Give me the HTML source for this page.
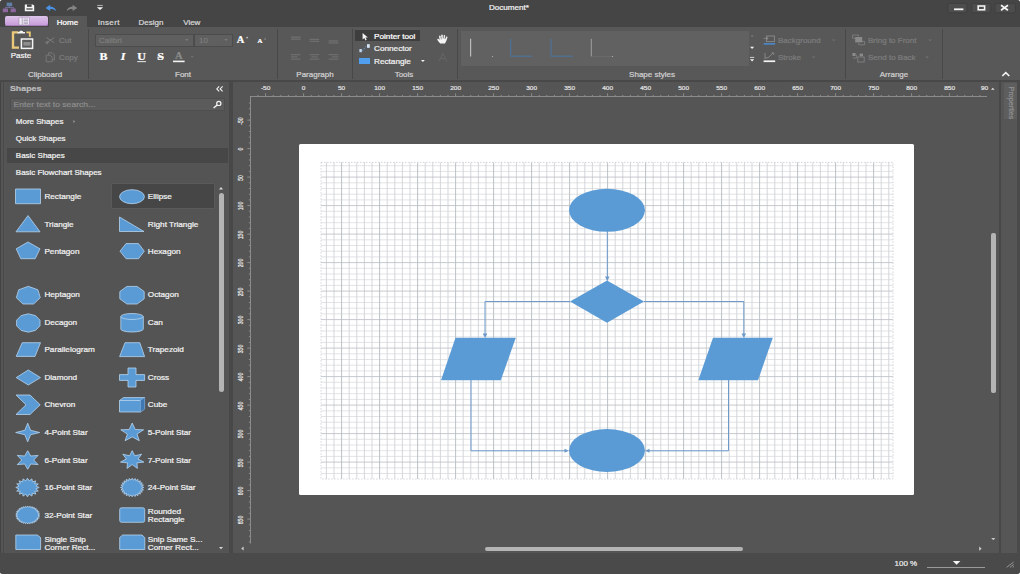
<!DOCTYPE html>
<html><head><meta charset="utf-8"><title>Document*</title>
<style>
html,body{margin:0;padding:0;background:#fff;overflow:hidden}
#app{position:relative;width:1020px;height:574px;overflow:hidden;border-radius:3px;background:#555555;font-family:"Liberation Sans",sans-serif}
#app>div{position:absolute}
.t{position:absolute;white-space:nowrap;line-height:1.05;transform:translateY(-50%) scaleY(.9);-webkit-text-stroke:0.25px currentColor}
.t.c{transform:translate(-50%,-50%) scaleY(.9);text-align:center}
.rl{font-size:6.5px;color:#e0e0e0}
.rv{font-size:7px;color:#e6e6e6;transform:translate(-50%,-50%) rotate(-90deg) scaleX(.72)}
#ov{position:absolute;left:0;top:0;width:1020px;height:574px;pointer-events:none}
</style></head><body><div id="app">
<div style="left:0px;top:0px;width:1020px;height:27px;background:#454545;"></div>
<span class="t c" style="left:509px;top:7.8px;font-size:8.1px;color:#f0f0f0;">Document*</span>
<div style="left:5.3px;top:16.3px;width:42.7px;height:10.0px;background:linear-gradient(#dcc4e7,#c799da);border-radius:2px;box-shadow:inset 0 -1px 0 #a57fb8"></div>
<div style="left:49px;top:16px;width:38px;height:12px;background:#585858;"></div>
<span class="t c" style="left:67.5px;top:22.9px;font-size:8px;color:#ffffff;">Home</span>
<span class="t c" style="left:108.7px;top:22.9px;font-size:8px;color:#d8d8d8;letter-spacing:.35px">Insert</span>
<span class="t c" style="left:151px;top:22.9px;font-size:8px;color:#d8d8d8;">Design</span>
<span class="t c" style="left:191.8px;top:22.9px;font-size:8px;color:#d8d8d8;">View</span>
<div style="left:0px;top:27px;width:1020px;height:53px;background:#585858;"></div>
<div style="left:0px;top:80px;width:1020px;height:2px;background:#484848;"></div>
<div style="left:88px;top:29px;width:1px;height:50px;background:#484848;"></div>
<div style="left:277px;top:29px;width:1px;height:50px;background:#484848;"></div>
<div style="left:352px;top:29px;width:1px;height:50px;background:#484848;"></div>
<div style="left:457px;top:29px;width:1px;height:50px;background:#484848;"></div>
<div style="left:845px;top:29px;width:1px;height:50px;background:#484848;"></div>
<div style="left:942px;top:29px;width:1px;height:50px;background:#484848;"></div>
<span class="t c" style="left:45px;top:75.4px;font-size:8px;color:#cfcfcf;">Clipboard</span>
<span class="t c" style="left:183px;top:75.4px;font-size:8px;color:#cfcfcf;">Font</span>
<span class="t c" style="left:315px;top:75.4px;font-size:8px;color:#cfcfcf;">Paragraph</span>
<span class="t c" style="left:404px;top:75.4px;font-size:8px;color:#cfcfcf;">Tools</span>
<span class="t c" style="left:652px;top:75.4px;font-size:8px;color:#cfcfcf;">Shape styles</span>
<span class="t c" style="left:894px;top:75.4px;font-size:8px;color:#cfcfcf;">Arrange</span>
<span class="t c" style="left:21px;top:55.6px;font-size:8px;color:#f0f0f0;">Paste</span>
<span class="t" style="left:59px;top:40.5px;font-size:8px;color:#7c7c7c;">Cut</span>
<span class="t" style="left:59px;top:57.5px;font-size:8px;color:#7c7c7c;">Copy</span>
<div style="left:95.5px;top:34.5px;width:97.5px;height:11.0px;background:#5f5f5f;box-shadow:0 0 0 1px #4c4c4c"></div>
<div style="left:195px;top:34.5px;width:37px;height:11.0px;background:#5f5f5f;box-shadow:0 0 0 1px #4c4c4c"></div>
<span class="t" style="left:99px;top:40.5px;font-size:8px;color:#7c7c7c;">Calibri</span>
<span class="t" style="left:199px;top:40.5px;font-size:8px;color:#7c7c7c;">10</span>
<span class="t c" style="left:240.6px;top:40.3px;font-size:10.5px;color:#ffffff;font-family:'Liberation Serif',serif;font-weight:bold;">A</span>
<span class="t c" style="left:260px;top:41.2px;font-size:6.8px;color:#ffffff;font-family:'Liberation Serif',serif;font-weight:bold;">A</span>
<span class="t c" style="left:103.5px;top:57.3px;font-size:12px;color:#ffffff;font-family:'Liberation Serif',serif;font-weight:bold;">B</span>
<span class="t c" style="left:123px;top:57.3px;font-size:12px;color:#ffffff;font-family:'Liberation Serif',serif;font-weight:bold;font-style:italic;">I</span>
<span class="t c" style="left:141.6px;top:57.3px;font-size:12px;color:#ffffff;font-family:'Liberation Serif',serif;font-weight:bold;text-decoration:underline;text-underline-offset:1px;">U</span>
<span class="t c" style="left:160.5px;top:57.3px;font-size:12px;color:#ffffff;font-family:'Liberation Serif',serif;font-weight:bold;text-decoration:line-through;">S</span>
<span class="t c" style="left:178.8px;top:56px;font-size:10.5px;color:#8c8c8c;font-family:'Liberation Serif',serif;font-weight:bold;">A</span>
<div style="left:355.2px;top:30.4px;width:64.80000000000001px;height:10.200000000000003px;background:#3e3e3e;"></div>
<span class="t" style="left:374px;top:36.8px;font-size:8.2px;color:#ffffff;">Pointer tool</span>
<span class="t" style="left:374px;top:49.1px;font-size:8.2px;color:#f0f0f0;">Connector</span>
<span class="t" style="left:374px;top:62px;font-size:8.2px;color:#f0f0f0;">Rectangle</span>
<div style="left:359px;top:58.2px;width:11.199999999999989px;height:6.0px;background:#4f9fee;"></div>
<div style="left:461px;top:30.5px;width:287.5px;height:35.0px;background:#616161;"></div>
<span class="t" style="left:778px;top:40.5px;font-size:8px;color:#7c7c7c;">Background</span>
<span class="t" style="left:778px;top:57.5px;font-size:8px;color:#7c7c7c;">Stroke</span>
<span class="t" style="left:868px;top:40.5px;font-size:8px;color:#7c7c7c;">Bring to Front</span>
<span class="t" style="left:868px;top:57.5px;font-size:8px;color:#7c7c7c;">Send to Back</span>
<div style="left:0px;top:82px;width:1020px;height:471px;background:#555555;"></div>
<div style="left:0px;top:82px;width:1px;height:492px;background:#444444;"></div>
<div style="left:3px;top:82px;width:1px;height:471px;background:#4a4a4a;"></div>
<div style="left:6px;top:83px;width:223px;height:469px;background:#545454;"></div>
<div style="left:229px;top:82px;width:4px;height:471px;background:#484848;"></div>
<span class="t" style="left:10px;top:89.2px;font-size:8.8px;color:#bcbcbc;font-weight:bold">Shapes</span>
<div style="left:10.5px;top:99px;width:213.5px;height:11px;background:#5b5b5b;box-shadow:0 0 0 1px #4e4e4e"></div>
<span class="t" style="left:13.6px;top:104.5px;font-size:8.6px;color:#8c8c8c;">Enter text to search...</span>
<span class="t" style="left:15.8px;top:121.5px;font-size:8px;color:#f0f0f0;">More Shapes</span>
<span class="t" style="left:15.8px;top:138.5px;font-size:8px;color:#f0f0f0;">Quick Shapes</span>
<div style="left:7px;top:147.6px;width:221px;height:15.599999999999994px;background:#474747;"></div>
<span class="t" style="left:15.8px;top:155.8px;font-size:8px;color:#f0f0f0;">Basic Shapes</span>
<span class="t" style="left:15.8px;top:173.4px;font-size:8px;color:#f0f0f0;">Basic Flowchart Shapes</span>
<div style="left:111px;top:183px;width:103.5px;height:26px;background:#464646;box-shadow:inset 0 0 0 1px #5a5a5a;border-radius:1px"></div>
<span class="t" style="left:44.4px;top:196.70000000000002px;font-size:8.2px;color:#f0f0f0;">Rectangle</span>
<span class="t" style="left:147.8px;top:196.70000000000002px;font-size:8.2px;color:#f0f0f0;">Ellipse</span>
<span class="t" style="left:44.4px;top:225.0px;font-size:8.2px;color:#f0f0f0;">Triangle</span>
<span class="t" style="left:147.8px;top:225.0px;font-size:8.2px;color:#f0f0f0;">Right Triangle</span>
<span class="t" style="left:44.4px;top:252.0px;font-size:8.2px;color:#f0f0f0;">Pentagon</span>
<span class="t" style="left:147.8px;top:252.0px;font-size:8.2px;color:#f0f0f0;">Hexagon</span>
<span class="t" style="left:44.4px;top:295.4px;font-size:8.2px;color:#f0f0f0;">Heptagon</span>
<span class="t" style="left:147.8px;top:295.4px;font-size:8.2px;color:#f0f0f0;">Octagon</span>
<span class="t" style="left:44.4px;top:322.7px;font-size:8.2px;color:#f0f0f0;">Decagon</span>
<span class="t" style="left:147.8px;top:322.7px;font-size:8.2px;color:#f0f0f0;">Can</span>
<span class="t" style="left:44.4px;top:350.4px;font-size:8.2px;color:#f0f0f0;">Parallelogram</span>
<span class="t" style="left:147.8px;top:350.4px;font-size:8.2px;color:#f0f0f0;">Trapezoid</span>
<span class="t" style="left:44.4px;top:377.7px;font-size:8.2px;color:#f0f0f0;">Diamond</span>
<span class="t" style="left:147.8px;top:377.7px;font-size:8.2px;color:#f0f0f0;">Cross</span>
<span class="t" style="left:44.4px;top:405.4px;font-size:8.2px;color:#f0f0f0;">Chevron</span>
<span class="t" style="left:147.8px;top:405.4px;font-size:8.2px;color:#f0f0f0;">Cube</span>
<span class="t" style="left:44.4px;top:433.2px;font-size:8.2px;color:#f0f0f0;">4-Point Star</span>
<span class="t" style="left:147.8px;top:433.2px;font-size:8.2px;color:#f0f0f0;">5-Point Star</span>
<span class="t" style="left:44.4px;top:460.79999999999995px;font-size:8.2px;color:#f0f0f0;">6-Point Star</span>
<span class="t" style="left:147.8px;top:460.79999999999995px;font-size:8.2px;color:#f0f0f0;">7-Point Star</span>
<span class="t" style="left:44.4px;top:488.2px;font-size:8.2px;color:#f0f0f0;">16-Point Star</span>
<span class="t" style="left:147.8px;top:488.2px;font-size:8.2px;color:#f0f0f0;">24-Point Star</span>
<span class="t" style="left:44.4px;top:516.0px;font-size:8.2px;color:#f0f0f0;">32-Point Star</span>
<span class="t" style="left:147.8px;top:516.0px;font-size:8.2px;color:#f0f0f0;">Rounded<br>Rectangle</span>
<span class="t" style="left:44.4px;top:543.6px;font-size:8.2px;color:#f0f0f0;">Single Snip<br>Corner Rect...</span>
<span class="t" style="left:147.8px;top:543.6px;font-size:8.2px;color:#f0f0f0;">Snip Same S...<br>Corner Rect...</span>
<div style="left:218.6px;top:193px;width:5.200000000000017px;height:199px;background:#b4b4b4;border-radius:2.5px"></div>
<div style="left:233px;top:82px;width:767px;height:15px;background:#555555;"></div>
<div style="left:298.8px;top:144.3px;width:615.2px;height:350.5px;background:#ffffff;border-radius:1.5px"></div>
<div style="left:1000px;top:82px;width:20px;height:471px;background:#565656;"></div>
<div style="left:999px;top:82px;width:2px;height:471px;background:#484848;"></div>
<div style="left:1004px;top:83px;width:13px;height:36px;background:#5e5e5e;"></div>
<div style="left:1017px;top:82px;width:3px;height:471px;background:#4a4a4a;"></div>
<span class="t" style="left:1011px;top:102.5px;font-size:7.2px;color:#8e8e8e;transform:translate(-50%,-50%) rotate(90deg)">Properties</span>
<div style="left:990.8px;top:233px;width:5.0px;height:160px;background:#b4b4b4;border-radius:2px"></div>
<div style="left:485px;top:546.8px;width:258px;height:4.2000000000000455px;background:#b4b4b4;border-radius:2px"></div>
<div style="left:0px;top:553px;width:1020px;height:21px;background:#4a4a4a;"></div>
<span class="t" style="left:894.5px;top:564.2px;font-size:8px;color:#e8e8e8;">100 %</span>
<div style="left:927px;top:567px;width:58px;height:1px;background:#9a9a9a;"></div>
<svg id="ov" width="1020" height="574" viewBox="0 0 1020 574"><path d="M321 165.7H893M321 171.4H893M321 182.8H893M321 188.5H893M321 194.2H893M321 199.9H893M321 211.3H893M321 217.0H893M321 222.7H893M321 228.4H893M321 239.8H893M321 245.5H893M321 251.2H893M321 256.9H893M321 268.3H893M321 274.0H893M321 279.7H893M321 285.4H893M321 296.8H893M321 302.5H893M321 308.2H893M321 313.9H893M321 325.3H893M321 331.0H893M321 336.7H893M321 342.4H893M321 353.8H893M321 359.5H893M321 365.2H893M321 370.9H893M321 382.3H893M321 388.0H893M321 393.7H893M321 399.4H893M321 410.8H893M321 416.5H893M321 422.2H893M321 427.9H893M321 439.3H893M321 445.0H893M321 450.7H893M321 456.4H893M321 467.8H893M321 473.5H893" stroke="#dadcdf" stroke-width="0.8" fill="none"/>
<path d="M326.4 162.4V479M334.0 162.4V479M349.2 162.4V479M356.8 162.4V479M364.4 162.4V479M372.0 162.4V479M387.2 162.4V479M394.8 162.4V479M402.4 162.4V479M410.0 162.4V479M425.2 162.4V479M432.8 162.4V479M440.4 162.4V479M448.0 162.4V479M463.2 162.4V479M470.8 162.4V479M478.4 162.4V479M486.0 162.4V479M501.2 162.4V479M508.8 162.4V479M516.4 162.4V479M524.0 162.4V479M539.2 162.4V479M546.8 162.4V479M554.4 162.4V479M562.0 162.4V479M577.2 162.4V479M584.8 162.4V479M592.4 162.4V479M600.0 162.4V479M615.2 162.4V479M622.8 162.4V479M630.4 162.4V479M638.0 162.4V479M653.2 162.4V479M660.8 162.4V479M668.4 162.4V479M676.0 162.4V479M691.2 162.4V479M698.8 162.4V479M706.4 162.4V479M714.0 162.4V479M729.2 162.4V479M736.8 162.4V479M744.4 162.4V479M752.0 162.4V479M767.2 162.4V479M774.8 162.4V479M782.4 162.4V479M790.0 162.4V479M805.2 162.4V479M812.8 162.4V479M820.4 162.4V479M828.0 162.4V479M843.2 162.4V479M850.8 162.4V479M858.4 162.4V479M866.0 162.4V479M881.2 162.4V479M888.8 162.4V479" stroke="#cfd2d6" stroke-width="0.9" fill="none"/>
<path d="M321 177.1H893M321 205.6H893M321 234.1H893M321 262.6H893M321 291.1H893M321 319.6H893M321 348.1H893M321 376.6H893M321 405.1H893M321 433.6H893M321 462.1H893" stroke="#bfc3c8" stroke-width="0.9" fill="none"/>
<path d="M341.6 162.4V479M379.6 162.4V479M417.6 162.4V479M455.6 162.4V479M493.6 162.4V479M531.6 162.4V479M569.6 162.4V479M607.6 162.4V479M645.6 162.4V479M683.6 162.4V479M721.6 162.4V479M759.6 162.4V479M797.6 162.4V479M835.6 162.4V479M873.6 162.4V479" stroke="#b6bbc2" stroke-width="0.9" fill="none"/>
<rect x="321" y="162.4" width="572" height="316.6" fill="none" stroke="#c8ccd2" stroke-width="0.8" stroke-dasharray="1.5 1.5"/>
<g stroke="#6d9acb" stroke-width="1" fill="none"><path d="M607.3 231V279"/><path d="M570 301.5H485V336"/><path d="M644 301.5H743.8V336"/><path d="M471 380V450.8H566"/><path d="M728.5 380V450.8H648"/></g>
<g fill="#6d9acb"><path d="M605 276.5h4.6l-2.3 4.5z"/><path d="M482.7 333.5h4.6l-2.3 4.5z"/><path d="M741.5 333.5h4.6l-2.3 4.5z"/><path d="M564.5 448.8v4l4.5 -2z"/><path d="M649.5 448.8v4l-4.5 -2z"/></g>
<g fill="#5b9bd5"><ellipse cx="607" cy="210.3" rx="38" ry="21.5"/><path d="M607 280.5L644 301.5L607 322.8L570 301.5z"/><path d="M455.5 337.8H515.8L500.8 380.2H441z"/><path d="M713 337.8H772.8L758 380.2H698.3z"/><ellipse cx="607" cy="450.5" rx="38" ry="21.5"/></g>
<path d="M250 96.5H987M250.5 96V543.5M258.0 96.5v-1.6M265.6 96.5v-3.2M273.2 96.5v-1.6M280.8 96.5v-1.6M288.4 96.5v-1.6M296.0 96.5v-1.6M303.6 96.5v-3.2M311.2 96.5v-1.6M318.8 96.5v-1.6M326.4 96.5v-1.6M334.0 96.5v-1.6M341.6 96.5v-3.2M349.2 96.5v-1.6M356.8 96.5v-1.6M364.4 96.5v-1.6M372.0 96.5v-1.6M379.6 96.5v-3.2M387.2 96.5v-1.6M394.8 96.5v-1.6M402.4 96.5v-1.6M410.0 96.5v-1.6M417.6 96.5v-3.2M425.2 96.5v-1.6M432.8 96.5v-1.6M440.4 96.5v-1.6M448.0 96.5v-1.6M455.6 96.5v-3.2M463.2 96.5v-1.6M470.8 96.5v-1.6M478.4 96.5v-1.6M486.0 96.5v-1.6M493.6 96.5v-3.2M501.2 96.5v-1.6M508.8 96.5v-1.6M516.4 96.5v-1.6M524.0 96.5v-1.6M531.6 96.5v-3.2M539.2 96.5v-1.6M546.8 96.5v-1.6M554.4 96.5v-1.6M562.0 96.5v-1.6M569.6 96.5v-3.2M577.2 96.5v-1.6M584.8 96.5v-1.6M592.4 96.5v-1.6M600.0 96.5v-1.6M607.6 96.5v-3.2M615.2 96.5v-1.6M622.8 96.5v-1.6M630.4 96.5v-1.6M638.0 96.5v-1.6M645.6 96.5v-3.2M653.2 96.5v-1.6M660.8 96.5v-1.6M668.4 96.5v-1.6M676.0 96.5v-1.6M683.6 96.5v-3.2M691.2 96.5v-1.6M698.8 96.5v-1.6M706.4 96.5v-1.6M714.0 96.5v-1.6M721.6 96.5v-3.2M729.2 96.5v-1.6M736.8 96.5v-1.6M744.4 96.5v-1.6M752.0 96.5v-1.6M759.6 96.5v-3.2M767.2 96.5v-1.6M774.8 96.5v-1.6M782.4 96.5v-1.6M790.0 96.5v-1.6M797.6 96.5v-3.2M805.2 96.5v-1.6M812.8 96.5v-1.6M820.4 96.5v-1.6M828.0 96.5v-1.6M835.6 96.5v-3.2M843.2 96.5v-1.6M850.8 96.5v-1.6M858.4 96.5v-1.6M866.0 96.5v-1.6M873.6 96.5v-3.2M881.2 96.5v-1.6M888.8 96.5v-1.6M896.4 96.5v-1.6M904.0 96.5v-1.6M911.6 96.5v-3.2M919.2 96.5v-1.6M926.8 96.5v-1.6M934.4 96.5v-1.6M942.0 96.5v-1.6M949.6 96.5v-3.2M957.2 96.5v-1.6M964.8 96.5v-1.6M972.4 96.5v-1.6M980.0 96.5v-1.6M250.5 103.0h-1.6M250.5 108.7h-1.6M250.5 114.4h-1.6M250.5 120.1h-3.2M250.5 125.8h-1.6M250.5 131.5h-1.6M250.5 137.2h-1.6M250.5 142.9h-1.6M250.5 148.6h-3.2M250.5 154.3h-1.6M250.5 160.0h-1.6M250.5 165.7h-1.6M250.5 171.4h-1.6M250.5 177.1h-3.2M250.5 182.8h-1.6M250.5 188.5h-1.6M250.5 194.2h-1.6M250.5 199.9h-1.6M250.5 205.6h-3.2M250.5 211.3h-1.6M250.5 217.0h-1.6M250.5 222.7h-1.6M250.5 228.4h-1.6M250.5 234.1h-3.2M250.5 239.8h-1.6M250.5 245.5h-1.6M250.5 251.2h-1.6M250.5 256.9h-1.6M250.5 262.6h-3.2M250.5 268.3h-1.6M250.5 274.0h-1.6M250.5 279.7h-1.6M250.5 285.4h-1.6M250.5 291.1h-3.2M250.5 296.8h-1.6M250.5 302.5h-1.6M250.5 308.2h-1.6M250.5 313.9h-1.6M250.5 319.6h-3.2M250.5 325.3h-1.6M250.5 331.0h-1.6M250.5 336.7h-1.6M250.5 342.4h-1.6M250.5 348.1h-3.2M250.5 353.8h-1.6M250.5 359.5h-1.6M250.5 365.2h-1.6M250.5 370.9h-1.6M250.5 376.6h-3.2M250.5 382.3h-1.6M250.5 388.0h-1.6M250.5 393.7h-1.6M250.5 399.4h-1.6M250.5 405.1h-3.2M250.5 410.8h-1.6M250.5 416.5h-1.6M250.5 422.2h-1.6M250.5 427.9h-1.6M250.5 433.6h-3.2M250.5 439.3h-1.6M250.5 445.0h-1.6M250.5 450.7h-1.6M250.5 456.4h-1.6M250.5 462.1h-3.2M250.5 467.8h-1.6M250.5 473.5h-1.6M250.5 479.2h-1.6M250.5 484.9h-1.6M250.5 490.6h-3.2M250.5 496.3h-1.6M250.5 502.0h-1.6M250.5 507.7h-1.6M250.5 513.4h-1.6M250.5 519.1h-3.2M250.5 524.8h-1.6M250.5 530.5h-1.6M250.5 536.2h-1.6M250.5 541.9h-1.6" stroke="#929292" stroke-width="0.9" fill="none"/><g fill="#5b9bd5" stroke="#b6d3ee" stroke-width="0.8" stroke-linejoin="round">
<rect x="15.5" y="189" width="25" height="14.7"/>
<ellipse cx="132" cy="196.7" rx="12.4" ry="7"/>
<path d="M28.0 215.6L40.0 231.8L16.0 231.8z" />
<path d="M119.5 217.0L144.0 231.5L119.5 231.5z" />
<path d="M28.0 242.0L40.0 248.8L35.2 258.7L20.8 258.7L16.2 248.8z" />
<path d="M120.0 251.2L126.0 243.6L138.5 243.6L144.3 251.2L138.5 258.7L126.0 258.7z" />
<path d="M28.3 286.3L37.9 289.8L40.3 297.7L33.6 304.0L23.0 304.0L16.3 297.7L18.7 289.8z" />
<path d="M137.1 286.4L144.2 291.6L144.2 298.8L137.1 304.0L126.9 304.0L119.8 298.8L119.8 291.6L126.9 286.4z" />
<path d="M28.3 313.8L35.5 315.6L40.0 320.2L40.0 325.8L35.5 330.4L28.3 332.2L21.1 330.4L16.6 325.8L16.6 320.2L21.1 315.6z" />
<path d="M120.8 316.5v12.5a11.2 3 0 0 0 22.5 0v-12.5z"/>
<ellipse cx="132" cy="316.5" rx="11.2" ry="3"/>
<path d="M22.2 342.7L40.5 342.7L35.0 356.4L16.2 356.4z" />
<path d="M125.0 342.7L139.8 342.7L144.6 356.6L119.6 356.6z" />
<path d="M28.3 370.0L40.5 377.6L28.3 385.0L16.2 377.6z" />
<path d="M128.0 368.0L136.0 368.0L136.0 374.6L144.6 374.6L144.6 380.4L136.0 380.4L136.0 387.0L128.0 387.0L128.0 380.4L119.5 380.4L119.5 374.6L128.0 374.6z" />
<path d="M16.0 395.0L30.0 395.0L40.2 404.8L30.0 414.5L16.0 414.5L26.0 404.8z" />
<path d="M119.5 400.5L123.5 397.6L144.6 397.6L144.6 409.0L140.5 412.0L119.5 412.0z" />
<path d="M119.5 400.5H140.5V412M140.5 400.5L144.6 397.6" fill="none"/>
<path d="M140.5 400.5L144.6 397.6V409L140.5 412z" fill="#3f78b3" stroke="none"/>
<path d="M27.7 423.2L30.6 430.3L39.7 432.5L30.6 434.7L27.7 441.8L24.8 434.7L15.7 432.5L24.8 430.3z" />
<path d="M132.2 423.0L135.2 429.5L143.6 429.8L137.0 434.1L139.3 440.7L132.2 436.9L125.1 440.7L127.4 434.1L120.8 429.8L129.2 429.5z" />
<path d="M27.7 450.7L30.7 456.0L38.1 455.4L33.7 460.0L38.1 464.6L30.7 464.0L27.7 469.3L24.7 464.0L17.3 464.6L21.7 460.0L17.3 455.4L24.7 456.0z" />
<path d="M132.2 450.7L134.8 455.8L141.6 454.2L138.0 459.0L143.9 462.1L136.9 462.9L137.4 468.4L132.2 464.6L127.0 468.4L127.5 462.9L120.5 462.1L126.4 459.0L122.8 454.2L129.6 455.8z" />
<path d="M27.5 478.2L29.2 480.8L32.0 478.9L32.3 481.8L35.8 480.9L34.7 483.7L38.3 483.9L36.0 486.2L39.2 487.5L36.0 488.8L38.3 491.1L34.7 491.3L35.8 494.1L32.3 493.2L32.0 496.1L29.2 494.2L27.5 496.8L25.8 494.2L23.0 496.1L22.7 493.2L19.2 494.1L20.3 491.3L16.7 491.1L19.0 488.8L15.8 487.5L19.0 486.2L16.7 483.9L20.3 483.7L19.2 480.9L22.7 481.8L23.0 478.9L25.8 480.8z" />
<path d="M132.2 478.2L133.4 480.1L135.2 478.5L135.8 480.6L138.0 479.4L137.9 481.6L140.5 480.9L139.6 483.0L142.3 482.9L140.8 484.7L143.5 485.1L141.5 486.5L143.9 487.5L141.5 488.5L143.5 489.9L140.8 490.3L142.3 492.1L139.6 492.0L140.5 494.1L137.9 493.4L138.0 495.6L135.8 494.4L135.2 496.5L133.4 494.9L132.2 496.8L131.0 494.9L129.2 496.5L128.6 494.4L126.3 495.6L126.5 493.4L123.9 494.1L124.8 492.0L122.1 492.1L123.6 490.3L120.9 489.9L122.9 488.5L120.5 487.5L122.9 486.5L120.9 485.1L123.6 484.7L122.1 482.9L124.8 483.0L123.9 480.9L126.5 481.6L126.3 479.4L128.6 480.6L129.2 478.5L131.0 480.1z" />
<path d="M27.7 506.0L28.7 507.3L30.0 506.2L30.7 507.6L32.3 506.7L32.6 508.2L34.4 507.5L34.2 509.0L36.2 508.6L35.7 510.1L37.7 510.0L36.8 511.4L38.8 511.6L37.6 512.8L39.5 513.2L38.0 514.2L39.7 515.0L38.0 515.8L39.5 516.8L37.6 517.2L38.8 518.4L36.8 518.6L37.7 520.0L35.7 519.9L36.2 521.4L34.2 521.0L34.4 522.5L32.6 521.8L32.3 523.3L30.7 522.4L30.0 523.8L28.7 522.7L27.7 524.0L26.7 522.7L25.4 523.8L24.7 522.4L23.1 523.3L22.8 521.8L21.0 522.5L21.2 521.0L19.2 521.4L19.7 519.9L17.7 520.0L18.6 518.6L16.6 518.4L17.8 517.2L15.9 516.8L17.4 515.8L15.7 515.0L17.4 514.2L15.9 513.2L17.8 512.8L16.6 511.6L18.6 511.4L17.7 510.0L19.7 510.1L19.2 508.6L21.2 509.0L21.0 507.5L22.8 508.2L23.1 506.7L24.7 507.6L25.4 506.2L26.7 507.3z" />
<rect x="119.7" y="507.8" width="25" height="14.5" rx="1.8"/>
<path d="M15.8 535.0L37.4 535.0L40.6 537.6L40.6 549.5L15.8 549.5z" />
<path d="M122.6 535.0L142.0 535.0L144.8 537.6L144.8 549.5L119.7 549.5L119.7 537.6z" />
</g><g><rect x="6.6" y="2.6" width="5.6" height="3.6" fill="#5f7fa6"/><path d="M9.4 6v1.6M5.2 9V7.6h8.4V9" stroke="#77709f" stroke-width="1" fill="none"/><rect x="2.8" y="8.6" width="5.2" height="3.6" fill="#8d689e"/><rect x="10.6" y="8.6" width="5.2" height="3.6" fill="#8d689e"/></g>
<path d="M24.8 4.4h8l1.4 1.2v5.6h-9.4z" fill="#f4f4f4"/><rect x="27" y="4.4" width="4.6" height="2.4" fill="#3f3f3f"/><rect x="26.4" y="8.4" width="6.2" height="1.2" fill="#3f3f3f"/>
<path d="M45.6 7.9l4.6-3.2v2c3.2 0 5.6 1.6 5.8 4.6c-1.2-1.7-3-2.2-5.8-2.2v2z" fill="#4a93e6"/>
<path d="M77.2 7.9l-4.6-3.2v2c-3.2 0-5.6 1.6-5.8 4.6c1.2-1.7 3-2.2 5.8-2.2v2z" fill="#848484"/>
<path d="M97.2 5.4h5.6" stroke="#bdbdbd" stroke-width="0.9"/><path d="M96.8 7.2h6.4l-3.2 2.8z" fill="#f4f4f4"/>
<g fill="#4d4d4d" stroke="#3d3d3d" stroke-width="0.8"><rect x="948" y="3.400" width="19" height="9.400" rx="2"/><rect x="971.600" y="3.400" width="19.200" height="9.400" rx="2"/><rect x="995" y="3.400" width="20.400" height="9.400" rx="2"/></g>
<rect x="954" y="8.4" width="9.4" height="1.8" fill="#f4f4f4"/>
<rect x="978.2" y="6" width="6.4" height="3.8" fill="none" stroke="#f4f4f4" stroke-width="1.6"/>
<path d="M1001 5.2l7 5M1008 5.2l-7 5" stroke="#f4f4f4" stroke-width="1.7" fill="none"/>
<rect x="19" y="17.2" width="10.4" height="7.8" rx="0.8" fill="#f1eaf5" stroke="#9c86a8" stroke-width="0.6"/><path d="M22.2 17.4v7.4M23.6 19h4.4M23.6 20.6h4.4M23.6 22.2h4.4M23.6 23.6h4.4" stroke="#9a8aa6" stroke-width="0.7"/>
<path d="M1002.300 76l3.500-3.300 3.500 3.300" stroke="#f4f4f4" stroke-width="1.600" fill="none"/>
<path d="M18.400 32.400h-5.400v15.200h6" stroke="#eac97a" stroke-width="2.400" fill="none"/><path d="M26.4 32.4h3.4v4.4" stroke="#eac97a" stroke-width="1.9" fill="none"/><path d="M17.6 33.6v-1.6h1.6c0-1.6 4-1.6 4 0h1.8v1.6z" fill="#f4f4f4"/><rect x="21.400" y="39" width="11.200" height="9.400" fill="#5c5c5c" stroke="#f4f4f4" stroke-width="1.5"/><rect x="23.400" y="42" width="7.200" height="3.600" fill="#8e8e8e"/>
<g stroke="#7c7c7c" stroke-width="1" fill="none"><path d="M46.6 37.6l7.6 5.2M54.2 37.6l-7.6 5.2"/><circle cx="47" cy="42.6" r="1.1"/><circle cx="47.6" cy="38" r="0.1"/></g>
<g stroke="#7c7c7c" stroke-width="0.9" fill="none"><path d="M48.6 55v-2.2h3.6l2.2 2.2v5h-2.2"/><path d="M46.2 55.2h4l2 2v4.6h-6z"/></g>
<path d="M185 39h3.6l-1.8 1.9z" fill="#7c7c7c"/><path d="M224.2 39h3.6l-1.8 1.9z" fill="#7c7c7c"/>
<path d="M245.8 38.2l1.3-1.6 1.3 1.6z" fill="#cfcfcf"/><path d="M264 39.4l1.1-1.4 1.1 1.4z" fill="#9a9a9a"/>
<rect x="173" y="60.6" width="11.6" height="1.6" fill="#f4f4f4"/><path d="M190.4 56h3.4l-1.7 1.8z" fill="#707070"/>
<g fill="#737373"><rect x="291" y="36.6" width="9.6" height="1.1"/><rect x="291" y="38.6" width="9.6" height="1.1"/><rect x="309.6" y="38.8" width="9.6" height="1.1"/><rect x="309.6" y="40.8" width="9.6" height="1.1"/><rect x="328.6" y="40.4" width="9.8" height="1.1"/><rect x="328.6" y="42.4" width="9.8" height="1.1"/><rect x="291" y="54.2" width="9.4" height="1"/><rect x="291" y="56.4" width="6.4" height="1"/><rect x="291" y="58.6" width="9.4" height="1"/><rect x="309.6" y="54.2" width="9.6" height="1"/><rect x="311.2" y="56.4" width="6.4" height="1"/><rect x="309.6" y="58.6" width="9.6" height="1"/><rect x="328.6" y="54.2" width="9.8" height="1"/><rect x="331.8" y="56.4" width="6.6" height="1"/><rect x="328.6" y="58.6" width="9.8" height="1"/></g>
<path d="M362.6 33v6.6l1.7-1.5 1.2 2.3 1.2-.6-1.2-2.2h2.4z" fill="#f4f4f4"/>
<rect x="367" y="44.2" width="2.8" height="3.6" fill="#d6e6f8"/><rect x="359.4" y="49" width="2.4" height="3.2" fill="#c4d8f0"/><path d="M362 50.6c2.6 0 2-4.4 5-4.6" stroke="#5a96dc" stroke-width="0.9" stroke-dasharray="1.4 1" fill="none"/>
<path d="M421 59.9h3.8l-1.9 2z" fill="#f4f4f4"/>
<path d="M440.2 43.600c-1.200-1.600-2.400-2.800-3-4.400c.6-.7 1.500-.3 2.400.9l-.6-3.900c.3-.8 1.200-.9 1.600-.1l.7 2.600l-.1-3.600c.3-.8 1.300-.8 1.600 0l.3 3.500l.6-3.200c.4-.7 1.300-.6 1.500.2l-.3 3.600l1.300-2.400c.5-.6 1.300-.3 1.300.5c-.5 2.300-1.300 4.400-2.500 6.300z" fill="#f4f4f4"/>
<path d="M441.400 39.400l-.5-2.400M443.200 38.600v-2.800M445 39l.3-2.600" stroke="#585858" stroke-width="0.5"/>
<path d="M439 61.400l3.900-8 3.900 8M440.600 58.600h4.600" stroke="#686868" stroke-width="0.9" fill="none"/>
<g fill="none" stroke-width="1"><path d="M470.600 38.800v17.600" stroke="#bcbcbc" stroke-width="1.200"/><rect x="492" y="56" width="1" height="1" fill="#b0b0b0"/><path d="M510.700 39v17.200h21.300" stroke="#4a76aa" stroke-width="0.9"/><path d="M551 39v17.200h22" stroke="#4a76aa" stroke-width="0.9"/><path d="M591.300 38.800v17.600" stroke="#a0a0a0"/><path d="M592 56.400h20" stroke="#6c6c6c"/><rect x="612" y="56" width="1" height="1" fill="#b0b0b0"/></g>
<path d="M750.400 36.600l1.700-1.800 1.700 1.800z" fill="#7a7a7a"/><path d="M750 46.800h4.200l-2.100 2.200z" fill="#f4f4f4"/><path d="M750 57.400h4.200" stroke="#f4f4f4" stroke-width="0.8"/><path d="M750 59.200h4.200l-2.100 2.200z" fill="#f4f4f4"/>
<g stroke="#8a8a8a" stroke-width="0.9" fill="none"><rect x="766.400" y="36" width="8" height="5.600"/><path d="M763.600 38.400h4.400M766.600 37l1.600 1.400-1.600 1.400"/></g><rect x="763.600" y="43" width="11.600" height="1.700" fill="#4b87c4"/>
<g stroke="#8a8a8a" stroke-width="0.9" fill="none"><path d="M765 53v6M765 57.800h3l5-4.600M771.600 52.800h2.200v2"/></g><rect x="763.600" y="60.400" width="11.600" height="1.700" fill="#f4f4f4"/>
<path d="M832 39.4h3.400l-1.700 1.800z" fill="#707070"/>
<path d="M812 56.6h3.400l-1.700 1.800z" fill="#707070"/>
<path d="M928.2 39.4h3.400l-1.700 1.800z" fill="#707070"/>
<path d="M925.4 56.6h3.400l-1.700 1.800z" fill="#707070"/>
<g fill="none" stroke="#808080" stroke-width="0.9"><path d="M855.600 38.200h-3v-3.200h6v1.400"/><path d="M862 41.400h2.600v3.400h-6v-1.600"/></g><rect x="855.200" y="37" width="7" height="5.400" fill="#8a8a8a"/>
<g fill="none" stroke="#808080" stroke-width="0.9"><rect x="857.800" y="57" width="6.400" height="5"/></g><rect x="852.400" y="53" width="3.200" height="3" fill="#8a8a8a"/><rect x="859.600" y="53.600" width="3.400" height="2.600" fill="#8a8a8a"/><path d="M852.800 58h3.600v-3.400" stroke="#808080" stroke-width="0.9" fill="none"/>
<path d="M219.200 86.400l-2.400 2.500 2.400 2.500M222.600 86.400l-2.400 2.500 2.400 2.500" stroke="#f4f4f4" stroke-width="1.100" fill="none"/>
<circle cx="218.800" cy="103.400" r="2.100" stroke="#f4f4f4" stroke-width="1.200" fill="none"/><path d="M217.200 105l-3.600 3" stroke="#f4f4f4" stroke-width="1.500"/>
<path d="M73.400 120l1.800 1.500-1.800 1.500z" fill="#9a9a9a"/>
<path d="M219 189.400l2-2.400 2 2.400z" fill="#d8d8d8"/><path d="M219 547h4l-2 2.200z" fill="#d8d8d8"/>
<path d="M991 89.800l1.800-2 1.800 2z" fill="#e0e0e0"/><path d="M991.200 538h4.200l-2.100 2.200z" fill="#c8c8c8"/><path d="M979.200 546.600v4.200l2.400-2.100z" fill="#d0d0d0"/><path d="M243.600 546.400v4.200l-2.400-2.100z" fill="#d0d0d0"/>
<path d="M952.800 561h7.600l-3.800 3.800z" fill="#f4f4f4"/>
<path d="M1006.600 567.400l7-5.400M1010 567.400l3.800-3M1012.800 567.400l1.200-1" stroke="#a8a8a8" stroke-width="0.8"/></svg><span class="t c rl" style="left:265.6px;top:88.6px">-50</span>
<span class="t c rl" style="left:303.6px;top:88.6px">0</span>
<span class="t c rl" style="left:341.6px;top:88.6px">50</span>
<span class="t c rl" style="left:379.6px;top:88.6px">100</span>
<span class="t c rl" style="left:417.6px;top:88.6px">150</span>
<span class="t c rl" style="left:455.6px;top:88.6px">200</span>
<span class="t c rl" style="left:493.6px;top:88.6px">250</span>
<span class="t c rl" style="left:531.6px;top:88.6px">300</span>
<span class="t c rl" style="left:569.6px;top:88.6px">350</span>
<span class="t c rl" style="left:607.6px;top:88.6px">400</span>
<span class="t c rl" style="left:645.6px;top:88.6px">450</span>
<span class="t c rl" style="left:683.6px;top:88.6px">500</span>
<span class="t c rl" style="left:721.6px;top:88.6px">550</span>
<span class="t c rl" style="left:759.6px;top:88.6px">600</span>
<span class="t c rl" style="left:797.6px;top:88.6px">650</span>
<span class="t c rl" style="left:835.6px;top:88.6px">700</span>
<span class="t c rl" style="left:873.6px;top:88.6px">750</span>
<span class="t c rl" style="left:911.6px;top:88.6px">800</span>
<span class="t c rl" style="left:949.6px;top:88.6px">850</span>
<span class="t c rl" style="left:984.6px;top:88.6px">90</span>
<span class="t rv" style="left:240.5px;top:120.6px">-50</span>
<span class="t rv" style="left:240.5px;top:149.1px">0</span>
<span class="t rv" style="left:240.5px;top:177.6px">50</span>
<span class="t rv" style="left:240.5px;top:206.1px">100</span>
<span class="t rv" style="left:240.5px;top:234.6px">150</span>
<span class="t rv" style="left:240.5px;top:263.1px">200</span>
<span class="t rv" style="left:240.5px;top:291.6px">250</span>
<span class="t rv" style="left:240.5px;top:320.1px">300</span>
<span class="t rv" style="left:240.5px;top:348.6px">350</span>
<span class="t rv" style="left:240.5px;top:377.1px">400</span>
<span class="t rv" style="left:240.5px;top:405.6px">450</span>
<span class="t rv" style="left:240.5px;top:434.1px">500</span>
<span class="t rv" style="left:240.5px;top:462.6px">550</span>
<span class="t rv" style="left:240.5px;top:491.1px">600</span>
<span class="t rv" style="left:240.5px;top:519.6px">650</span>
</div></body></html>
